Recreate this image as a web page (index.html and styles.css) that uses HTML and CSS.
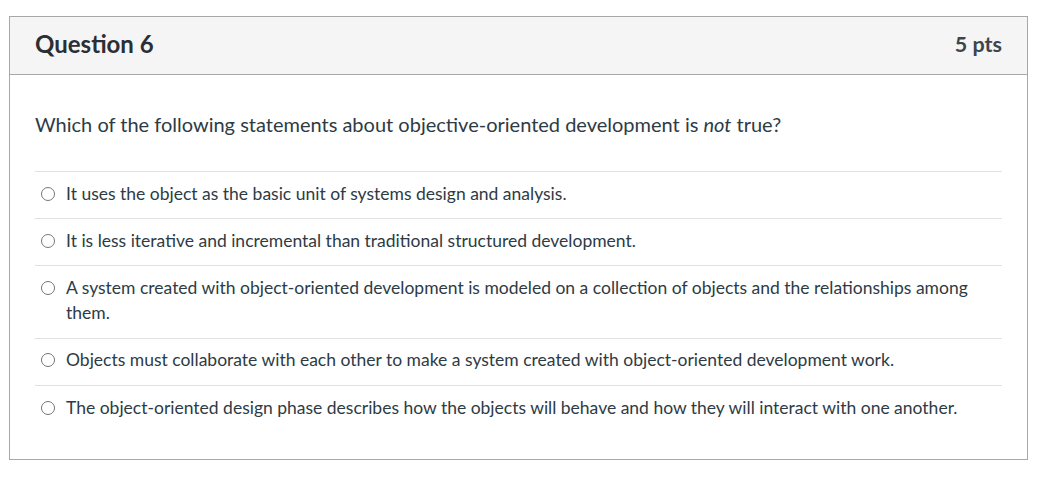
FILE: index.html
```html
<!DOCTYPE html>
<html>
<head>
<meta charset="utf-8">
<link rel="stylesheet" href="styles.css">
</head>
<body>
<div class="question">
  <div class="header">
    <span class="title">Question 6</span>
    <span class="points">5 pts</span>
  </div>
  <div class="content">
    <p class="text">Which of the following statements about objective-oriented development is <em>not</em> true?</p>
    <div class="answers">
      <label class="answer"><span class="radio"></span><span class="label">It uses the object as the basic unit of systems design and analysis.</span></label>
      <label class="answer"><span class="radio"></span><span class="label">It is less iterative and incremental than traditional structured development.</span></label>
      <label class="answer"><span class="radio"></span><span class="label">A system created with object-oriented development is modeled on a collection of objects and the relationships among them.</span></label>
      <label class="answer"><span class="radio"></span><span class="label">Objects must collaborate with each other to make a system created with object-oriented development work.</span></label>
      <label class="answer"><span class="radio"></span><span class="label">The object-oriented design phase describes how the objects will behave and how they will interact with one another.</span></label>
    </div>
  </div>
</div>
</body>
</html>
```
FILE: styles.css
```css
html, body {
  margin: 0;
  background: #fff;
}
body {
  padding: 16px 0 0 9px;
  font-family: Lato, "Liberation Sans", sans-serif;
  color: #2d3b45;
}
.question {
  width: 1019px;
  box-sizing: border-box;
  border: 1px solid #a8a8a8;
}
.header {
  display: flex;
  justify-content: space-between;
  align-items: center;
  height: 58px;
  box-sizing: border-box;
  padding: 0 25px 4px;
  background: #f5f5f5;
  border-bottom: 1px solid #a8a8a8;
  font-weight: 700;
}
.title {
  font-size: 24px;
  color: #2b2e33;
}
.points {
  color: #3d454c;
  font-size: 21.5px;
}
.content {
  padding: 0 25px 27px;
}
.text {
  margin: 0;
  padding: 36px 0 34px;
  font-size: 20px;
  line-height: 26px;
}
.answers {
  display: flex;
  flex-direction: column;
}
.answer {
  display: flex;
  align-items: flex-start;
  border-top: 1px solid #dfe1e3;
  padding: 8.5px 0 12.5px;
  font-size: 17.5px;
  line-height: 25.2px;
}
.radio {
  flex: none;
  width: 14px;
  height: 14px;
  box-sizing: border-box;
  border: 1px solid #777;
  border-radius: 50%;
  margin: 6px 11px 0 6px;
}
```
